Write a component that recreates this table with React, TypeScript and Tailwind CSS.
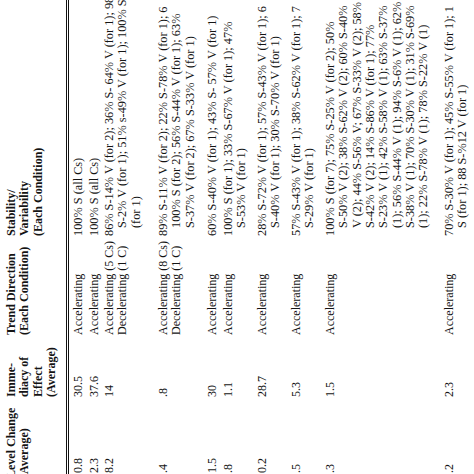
import React from "react";

type Row = {
  level: string;
  imm: string;
  trend: string[];
  stab: string[];
  h: string;
};

const rows: Row[] = [
  { level: "0.8", imm: "30.5", trend: ["Accelerating"], stab: ["100% S (all Cs)"], h: "h-[16px]" },
  { level: "2.3", imm: "37.6", trend: ["Accelerating"], stab: ["100% S (all Cs)"], h: "h-[15px]" },
  {
    level: "8.2",
    imm: "14",
    trend: ["Accelerating (5 Cs)", "Decelerating (1 C)"],
    stab: [
      "86% S-14% V (for 2); 36% S- 64% V (for 1); 98%",
      "S-2% V (for 1); 51% s-49% V (for 1); 100% S",
      "(for 1)",
    ],
    h: "h-[54px]",
  },
  {
    level: ".4",
    imm: ".8",
    trend: ["Accelerating (8 Cs)", "Decelerating (1 C)"],
    stab: [
      "89% S-11% V (for 2); 22% S-78% V (for 1); 6",
      "100% S (for 2); 56% S-44% V (for 1); 63%",
      "S-37% V (for 2); 67% S-33% V (for 1)",
    ],
    h: "h-[49px]",
  },
  {
    level: "1.5",
    imm: "30",
    trend: ["Accelerating"],
    stab: ["60% S-40% V (for 1); 43% S- 57% V (for 1)"],
    h: "h-[16px]",
  },
  {
    level: ".8",
    imm: "1.1",
    trend: ["Accelerating"],
    stab: ["100% S (for 1); 33% S-67% V (for 1); 47%", "S-53% V (for 1)"],
    h: "h-[34px]",
  },
  {
    level: "0.2",
    imm: "28.7",
    trend: ["Accelerating"],
    stab: ["28% S-72% V (for 1); 57% S-43% V (for 1); 6", "S-40% V (for 1); 30% S-70% V (for 1)"],
    h: "h-[34px]",
  },
  {
    level: ".5",
    imm: "5.3",
    trend: ["Accelerating"],
    stab: ["57% S-43% V (for 1); 38% S-62% V (for 1); 7", "S-29% V (for 1)"],
    h: "h-[34px]",
  },
  {
    level: ".3",
    imm: "1.5",
    trend: ["Accelerating"],
    stab: [
      "100% S (for 7); 75% S-25% V (for 2); 50%",
      "S-50% V (2); 38% S-62% V (2); 60% S-40%",
      "V (2); 44% S-56% V; 67% S-33% V (2); 58%",
      "S-42% V (2); 14% S-86% V (for 1); 77%",
      "S-23% V (1); 42% S-58% V (1); 63% S-37%",
      "(1); 56% S-44% V (1); 94% S-6% V (1); 62%",
      "S-38% V (1); 70% S-30% V (1); 31% S-69%",
      "(1); 22% S-78% V (1); 78% S-22% V (1)",
    ],
    h: "h-[119px]",
  },
  {
    level: ".2",
    imm: "2.3",
    trend: ["Accelerating"],
    stab: ["70% S-30% V (for 1); 45% S-55% V (for 1); 1", "S (for 1); 88 S-%12 V (for 1)"],
    h: "h-[40px]",
  },
];

function Lines({ items, indent }: { items: string[]; indent?: boolean }) {
  return (
    <div className="flex flex-col">
      {items.map((t, i) => (
        <div key={i} className={indent && i > 0 ? "pl-[8px]" : ""}>
          {t}
        </div>
      ))}
    </div>
  );
}

export default function App() {
  return (
    <div className="w-[474px] h-[474px] overflow-hidden bg-white">
      <div className="w-[474px] h-[474px] -rotate-90 overflow-hidden whitespace-nowrap font-['Liberation_Serif','Times_New_Roman',serif] text-[12px] leading-[13.3px] text-[#141414]">
        <div className="grid grid-cols-[77px_62px_99px_236px] pt-[5px] pb-[8px] border-b-[3px] border-double border-[#111] font-bold">
          <div className="-ml-[4px] flex flex-col">
            <div>Level Change</div>
            <div>(Average)</div>
          </div>
          <div className="flex flex-col">
            <div>Imme-</div>
            <div>diacy of</div>
            <div>Effect</div>
            <div>(Average)</div>
          </div>
          <div className="flex flex-col">
            <div>Trend Direction</div>
            <div>(Each Condition)</div>
          </div>
          <div className="flex flex-col">
            <div>Stability/</div>
            <div>Variability</div>
            <div>(Each Condition)</div>
          </div>
        </div>
        {rows.map((r, i) => (
          <div key={i} className={`grid grid-cols-[77px_62px_99px_236px] pt-[3px] ${r.h}`}>
            <div className="pl-[1px]">{r.level}</div>
            <div>{r.imm}</div>
            <Lines items={r.trend} />
            <div className="text-[12.3px]">
              <Lines items={r.stab} indent />
            </div>
          </div>
        ))}
      </div>
    </div>
  );
}
